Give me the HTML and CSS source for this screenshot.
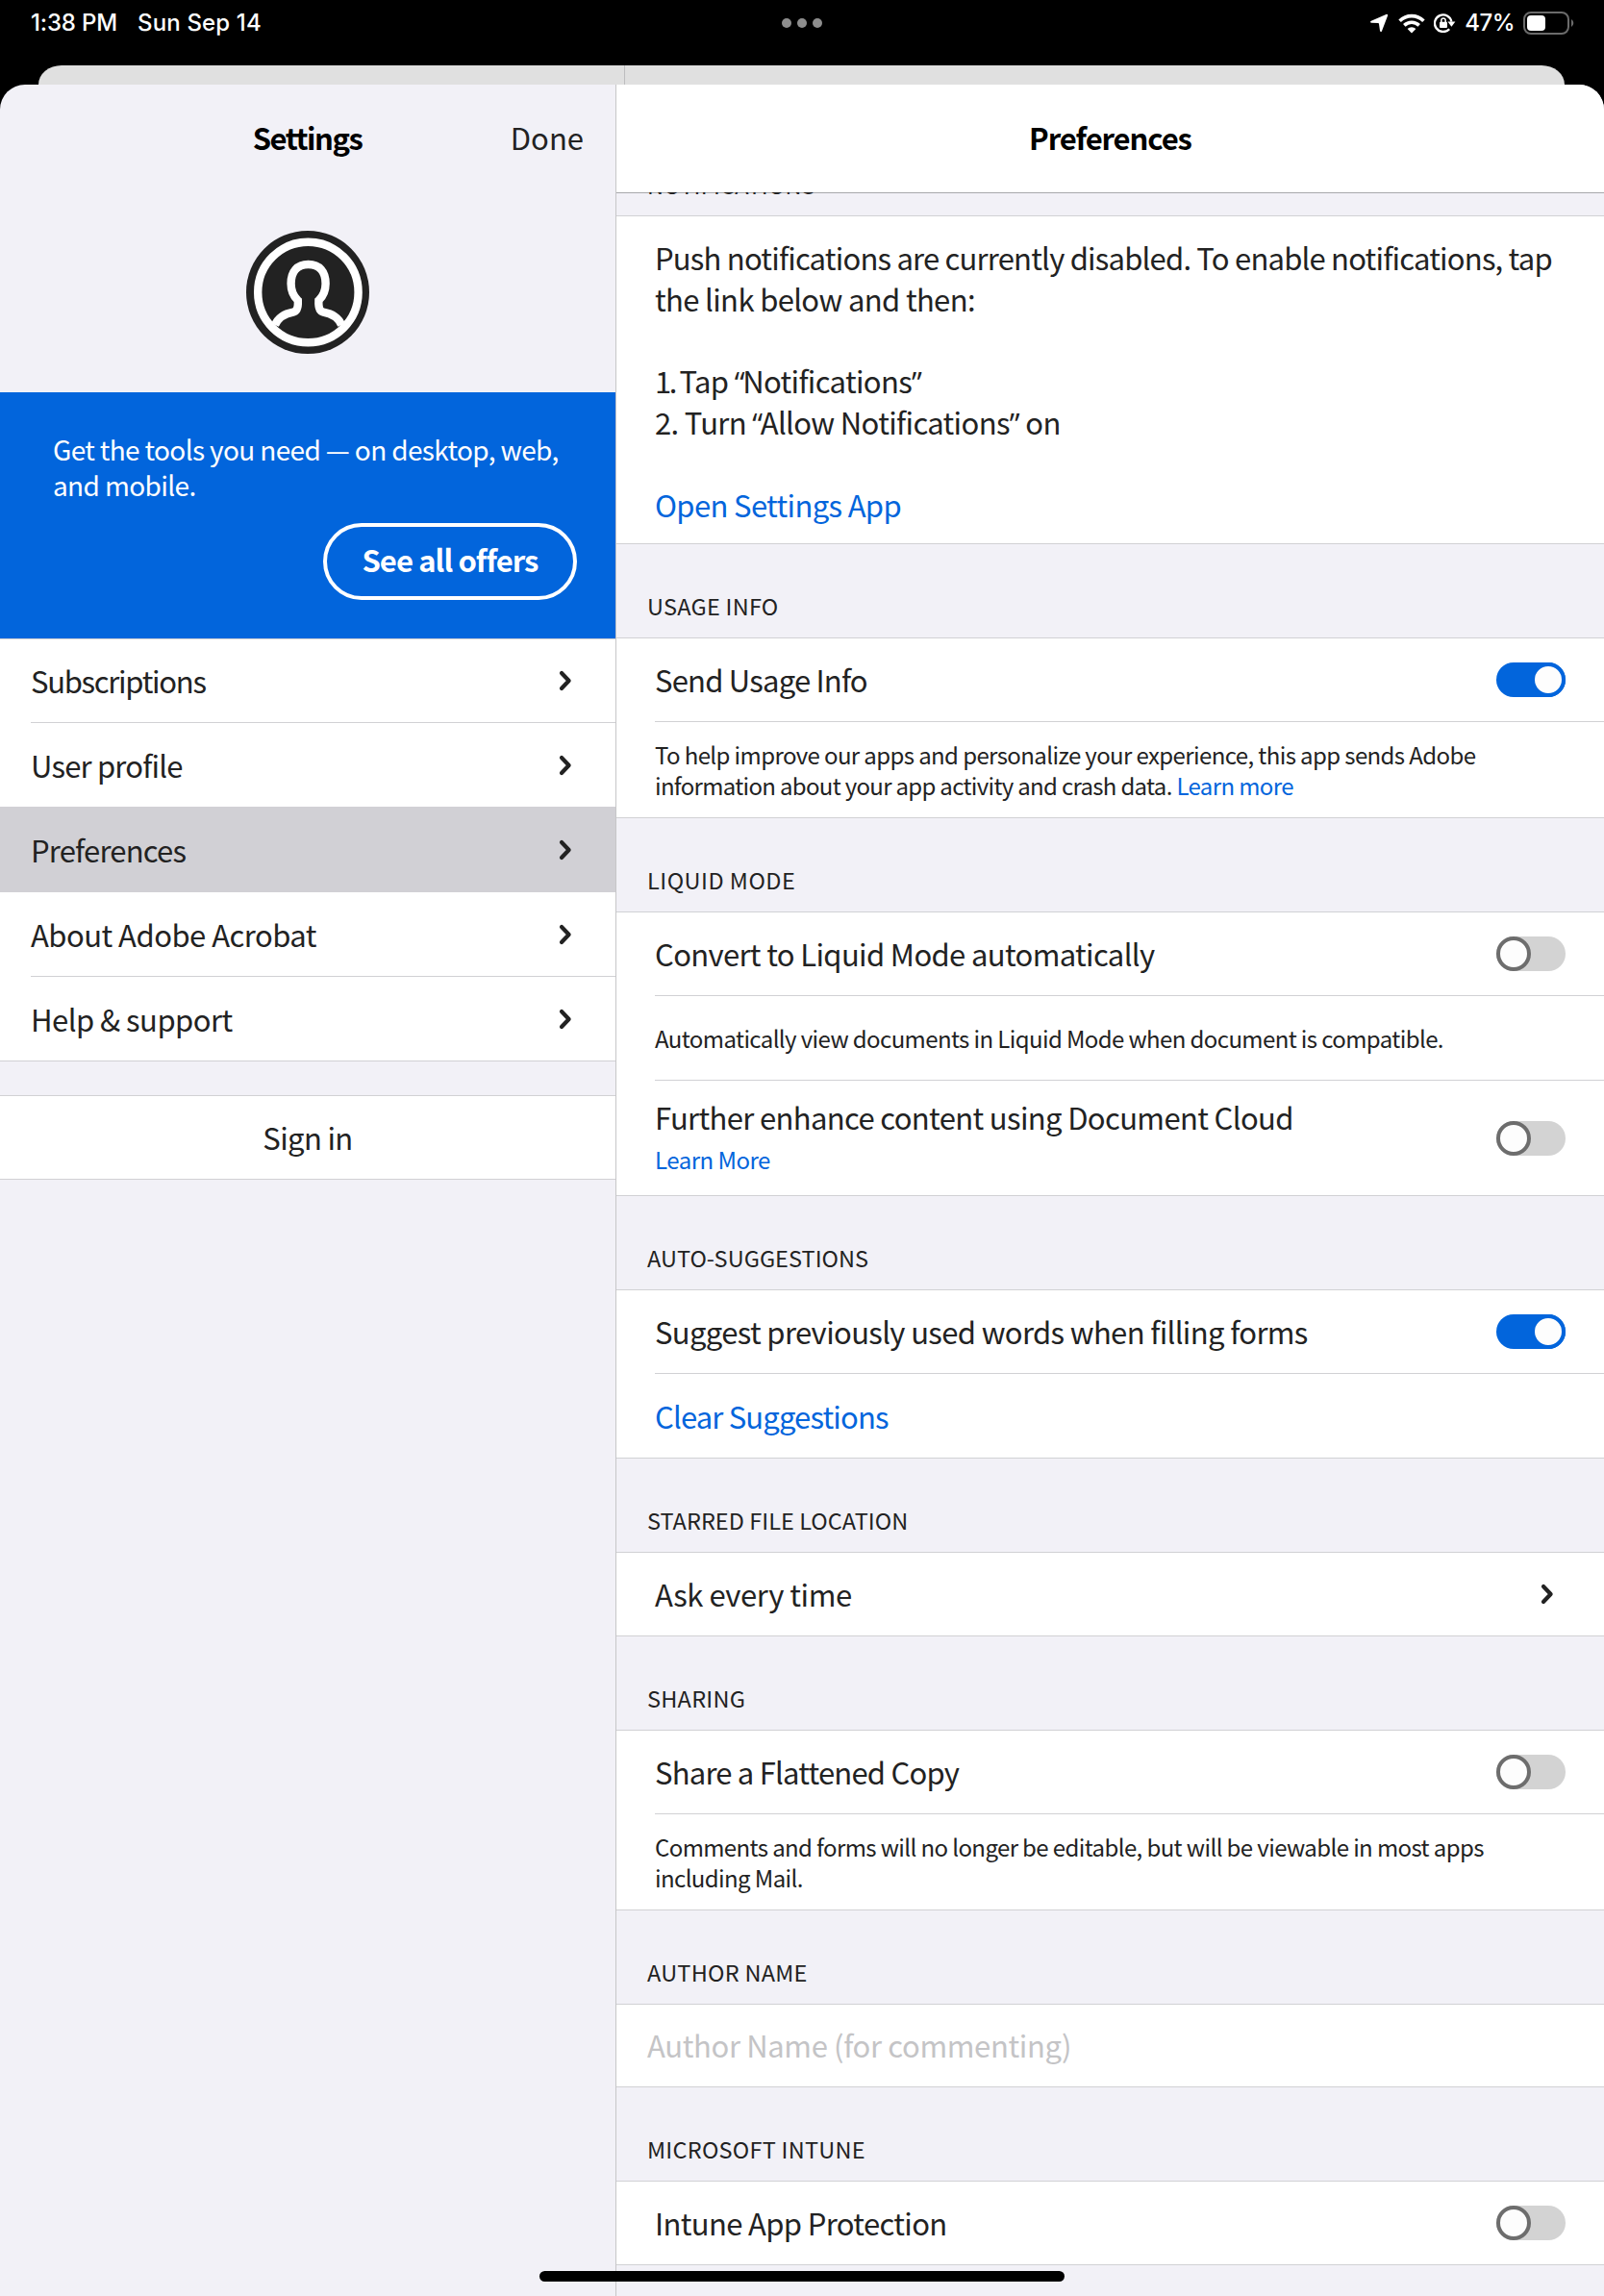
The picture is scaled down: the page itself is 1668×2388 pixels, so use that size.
FILE: index.html
```html
<!DOCTYPE html>
<html lang="en">
<head>
<meta charset="utf-8">
<title>Settings – Preferences</title>
<link rel="stylesheet" href="styles.css">
</head>
<body>
<svg class="defs" aria-hidden="true">
  <symbol id="chevron" viewBox="0 0 14 22"><path d="M3 3 L10.6 11 L3 19" fill="none" stroke="#222" stroke-width="4.2" stroke-linecap="round" stroke-linejoin="round"/></symbol>
</svg>
<header class="status">
  <div class="status-left"><span class="time">1:38 PM</span><span class="date">Sun Sep 14</span></div>
  <div class="dots"><i></i><i></i><i></i></div>
  <div class="status-right">
    <svg class="ic-loc" width="20" height="20" viewBox="0 0 20 20"><path d="M17.4 .9 C18.700 .4 19.500 1.2 19 2.5 L13 18.200 C12.500 19.400 11.200 19.300 11 18 L10 11 Q9.900 10.200 9.100 10.100 L2.300 9.800 C.8 9.700 .6 8.300 1.900 7.800 Z" fill="#fff"/></svg>
    <svg class="ic-wifi" width="28" height="21" viewBox="0 0 28 21"><g fill="none" stroke="#fff" stroke-width="3.6"><path d="M1.6 7.7 A17.6 17.6 0 0 1 26.4 7.7"/><path d="M6.3 12.4 A11 11 0 0 1 21.7 12.4"/></g><path d="M14 20.4 L9.6 16 A6.4 6.4 0 0 1 18.4 16 Z" fill="#fff"/></svg>
    <svg class="ic-lock" width="23" height="20" viewBox="0 0 23 20"><path d="M16.200 16.2 A8.800 8.800 0 1 1 18.400 8.600" fill="none" stroke="#fff" stroke-width="2.3"/><path d="M14.400 8.400 H22.400 L18.400 13.800 Z" fill="#fff"/><rect x="6" y="8.800" width="8" height="6.200" rx="1" fill="#fff"/><path d="M7.800 9 V7.2 a2.200 2.200 0 0 1 4.400 0 V9" fill="none" stroke="#fff" stroke-width="1.5"/></svg>
    <span class="pct">47%</span>
    <svg class="ic-batt" width="54" height="24" viewBox="0 0 54 24"><rect x="1" y="1" width="46" height="22" rx="7" fill="none" stroke="#6b6b6b" stroke-width="2"/><rect x="4" y="4" width="19" height="16" rx="4" fill="#fff"/><path d="M50 8 a4.6 4.6 0 0 1 0 8 Z" fill="#6b6b6b"/></svg>
  </div>
</header>
<div class="back-card"><div class="back-line"></div></div>
<main class="sheet">
  <aside class="side">
    <div class="bar side-bar"><h1 class="title tr-settings">Settings</h1><button class="done">Done</button></div>
    <svg class="avatar" width="128" height="128" viewBox="0 0 128 128">
      <circle cx="64" cy="64" r="64" fill="#222"/>
      <g fill="none" stroke="#fff" stroke-width="8.4">
        <circle cx="64.4" cy="64" r="52.2"/>
        <path d="M30 98 C33 91 40 86.2 49 84.6 C53 83.8 54.2 80 53.8 72.5 C49 68 46.6 62 46.6 55 C46.6 42.5 53 35 64.6 35 C76.2 35 82.6 42.5 82.6 55 C82.6 62 80.2 68 75.4 72.5 C75 80 76.2 83.8 80.2 84.6 C89.2 86.2 96.2 91 99.2 98"/>
      </g>
    </svg>
    <section class="promo">
      <p>Get the tools you need — on desktop, web,<br>and mobile.</p>
      <button class="offers">See all offers</button>
    </section>
    <nav class="menu">
      <a class="tr-sub"><div class="line">Subscriptions<svg class="chev"><use href="#chevron"/></svg></div></a>
      <a class="tr-tight"><div class="line last">User profile<svg class="chev"><use href="#chevron"/></svg></div></a>
      <a class="selected tr-tight"><div class="line last">Preferences<svg class="chev"><use href="#chevron"/></svg></div></a>
      <a class="tr-loose"><div class="line">About Adobe Acrobat<svg class="chev"><use href="#chevron"/></svg></div></a>
      <a class="tr-loose"><div class="line last">Help &amp; support<svg class="chev"><use href="#chevron"/></svg></div></a>
    </nav>
    <button class="signin">Sign in</button>
  </aside>
  <section class="pane">
    <div class="bar pane-bar"><h2 class="title">Preferences</h2></div>
    <div class="scroll">
      <h3 class="label clipped">NOTIFICATIONS</h3>
      <div class="group notice">
        <p class="tr-push">Push notifications are currently disabled. To enable notifications, tap</p>
        <p>the link below and then:</p>
        <p class="gap"><span class="num">1. </span>Tap <span class="q">“</span>Notifications<span class="q">”</span></p>
        <p>2. Turn <span class="q">“</span>Allow Notifications<span class="q end">”</span> on</p>
        <p class="gap"><a class="link">Open Settings App</a></p>
      </div>
      <h3 class="label">USAGE INFO</h3>
      <div class="group">
        <div class="row tr-send">Send Usage Info<span class="toggle on"><i></i></span></div>
        <div class="note"><p class="small">To help improve our apps and personalize your experience, this app sends Adobe<br><span class="tr-info">information about your app activity and crash data.</span> <a class="link">Learn more</a></p></div>
      </div>
      <h3 class="label tr-liquid">LIQUID MODE</h3>
      <div class="group">
        <div class="row">Convert to Liquid Mode automatically<span class="toggle"><i></i></span></div>
        <div class="row small">Automatically view documents in Liquid Mode when document is compatible.</div>
        <div class="row tall last"><div class="stack"><p>Further enhance content using Document Cloud</p><p class="small more"><a class="link">Learn More</a></p></div><span class="toggle"><i></i></span></div>
      </div>
      <h3 class="label tr-auto">AUTO-SUGGESTIONS</h3>
      <div class="group">
        <div class="row">Suggest previously used words when filling forms<span class="toggle on"><i></i></span></div>
        <div class="row last clear"><a class="link">Clear Suggestions</a></div>
      </div>
      <h3 class="label tr-auto">STARRED FILE LOCATION</h3>
      <div class="group">
        <div class="row last tr-ask">Ask every time<svg class="chev ask"><use href="#chevron"/></svg></div>
      </div>
      <h3 class="label">SHARING</h3>
      <div class="group">
        <div class="row tr-send">Share a Flattened Copy<span class="toggle"><i></i></span></div>
        <div class="note"><p class="small">Comments and forms will no longer be editable, but will be viewable in most apps<br>including Mail.</p></div>
      </div>
      <h3 class="label">AUTHOR NAME</h3>
      <div class="group">
        <div class="row last author">Author Name (for commenting)</div>
      </div>
      <h3 class="label">MICROSOFT INTUNE</h3>
      <div class="group">
        <div class="row last">Intune App Protection<span class="toggle"><i></i></span></div>
      </div>
    </div>
  </section>
</main>
<div class="home"></div>
</body>
</html>
```
FILE: styles.css
```css
* { box-sizing: border-box; margin: 0; padding: 0; }
html, body { width: 1668px; height: 2388px; overflow: hidden; background: #000; }
body {
  position: relative;
  display: flex;
  flex-direction: column;
  font-family: "Noto Sans CJK SC", "Noto Sans", sans-serif;
  font-size: 31px;
  letter-spacing: -.64px;
  line-height: 42px;
  color: #222;
  white-space: nowrap;
}
button { border: 0; background: none; font: inherit; letter-spacing: inherit; color: inherit; }
p, h1, h2, h3 { font-weight: 400; font-size: inherit; }
svg { display: block; flex: none; }
.defs { position: absolute; width: 0; height: 0; }

/* status bar */
.status {
  height: 68px;
  flex: none;
  display: grid;
  grid-template-columns: 1fr auto 1fr;
  padding: 0 30px 20px 32px;
  align-items: center;
  color: #fff;
  font: 500 24px/28px Inter, sans-serif;
  letter-spacing: 0;
}
.status-left { display: flex; gap: 21px; }
.time { letter-spacing: -.15px; }
.date { letter-spacing: .15px; }
.dots { display: flex; gap: 6px; margin-right: 2px; }
.dots i { width: 10px; height: 10px; border-radius: 50%; background: #8e8e8e; }
.status-right { display: flex; justify-content: flex-end; align-items: center; }
.ic-wifi { margin-left: 10px; }
.ic-lock { margin-left: 9px; }
.pct { margin-left: 9px; letter-spacing: -.5px; }
.ic-batt { margin-left: 9px; }

/* sheets */
.back-card {
  height: 20px;
  flex: none;
  margin: 0 41px 0 40px;
  padding-left: 609px;
  background: #e0e0e0;
  border-radius: 24px 24px 0 0 / 20px 20px 0 0;
}
.back-line { width: 1px; height: 20px; background: #bdbdbf; }
.sheet {
  flex: 1;
  min-height: 0;
  display: flex;
  background: #f2f1f7;
  border-radius: 26px 26px 0 0;
  overflow: hidden;
}
.side { width: 641px; flex: none; border-right: 1px solid #c6c6c8; }
.pane { flex: 1; min-width: 0; display: flex; flex-direction: column; }
.bar { height: 112px; flex: none; display: grid; align-items: center; padding-bottom: 3px; }
.side-bar { grid-template-columns: 1fr auto 1fr; padding-right: 33px; padding-left: 32px; }
.side-bar .title { grid-column: 2; }
.title { font-weight: 700; color: #000; letter-spacing: -1.08px; text-align: center; }
.title.tr-settings { letter-spacing: -1.5px; }
.done { justify-self: end; letter-spacing: 0; }
.pane-bar { background: #fff; }

/* sidebar */
.avatar { margin: 40px auto 40px; }
.promo {
  height: 256px;
  padding: 41px 40px 0 55px;
  background: #0265dc;
  color: #fff;
  font-size: 28px;
  line-height: 37px;
}
.offers {
  display: block;
  width: 264px;
  height: 80px;
  margin: 21px 0 0 auto;
  padding-bottom: 5px;
  border: 4px solid #fff;
  border-radius: 40px;
  font-size: 31px;
  line-height: 42px;
  font-weight: 700;
  letter-spacing: -.91px;
}
.menu { background: #fff; border-top: 1px solid #d1d1d4; border-bottom: 1px solid #d1d1d4; }
.menu a { display: block; padding-left: 32px; }
.line { height: 87px; display: flex; align-items: center; justify-content: space-between; padding-right: 45px; border-bottom: 1px solid #d1d1d4; }
.line.last { border-bottom: 0; }
.menu .selected { background: #d1d0d5; }
.selected .line { height: 89px; }
.menu a:nth-child(4) .line { height: 88px; }
.tr-sub { letter-spacing: -1.28px; }
.tr-tight { letter-spacing: -.8px; }
.tr-loose { letter-spacing: -.52px; }
.chev { width: 14px; height: 22px; }
.signin {
  display: block;
  width: 100%;
  height: 88px;
  margin-top: 35px;
  border: solid #d1d1d4;
  border-width: 1px 0;
  background: #fff;
}

/* preferences list */
.scroll {
  flex: 1;
  min-height: 0;
  overflow: hidden;
  background: linear-gradient(#a8a8ac, #a8a8ac) 0 0 / 100% 1px no-repeat;
}
.label { height: 97px; padding: 48px 0 0 32px; font-size: 23.5px; line-height: 32px; letter-spacing: .25px; }
.label.clipped { margin-top: -73px; padding-top: 49px; }
.label.tr-liquid { letter-spacing: .5px; }
.label.tr-auto { letter-spacing: .04px; }
.group { background: #fff; border: solid #d1d1d4; border-width: 1px 0; padding-left: 40px; }
.notice { height: 342px; padding-top: 22.4px; line-height: 42.4px; }
.notice .gap { margin-top: 42.4px; }
.num { letter-spacing: -2.4px; }
.q { font-family: "Open Sans", sans-serif; letter-spacing: -2.4px; }
.q.end { letter-spacing: -.6px; }
.tr-push { letter-spacing: -.79px; }
.tr-send { letter-spacing: -.78px; }
.tr-ask { letter-spacing: -.44px; }
.link { color: #0265dc; }
.row { height: 87px; display: flex; align-items: center; justify-content: space-between; padding-right: 40px; border-bottom: 1px solid #d1d1d4; }
.row.small { height: 88px; }
.row.last { height: 86px; border-bottom: 0; }
.row.clear { height: 87px; letter-spacing: -.84px; }
.row.tall { height: 119px; }
.stack { padding-bottom: 5px; }
.small { font-size: 24px; line-height: 32px; letter-spacing: -.61px; }
.tr-info { letter-spacing: -.69px; }
.more { margin-top: 7px; letter-spacing: -.5px; }
.note { height: 99px; padding-top: 18px; }
.row.author { height: 85px; margin-left: -8px; padding-bottom: 2px; color: #c4c4c6; letter-spacing: -.36px; }
.toggle { width: 72px; height: 36px; flex: none; border-radius: 18px; background: #d3d3d3; display: flex; }
.toggle i { width: 36px; height: 36px; border: 4px solid #6d6d6d; border-radius: 50%; background: #fdfdfd; }
.toggle.on { background: #0265dc; justify-content: flex-end; }
.toggle.on i { border-color: #0265dc; }
.chev.ask { margin-right: 12px; }

/* home indicator floats over the sheet */
.home { position: absolute; left: 561px; top: 2362px; width: 546px; height: 11px; border-radius: 6px; background: #000; }
```
